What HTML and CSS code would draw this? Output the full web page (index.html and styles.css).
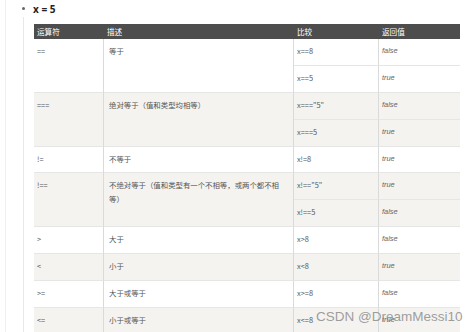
FILE: index.html
```html
<!DOCTYPE html>
<html lang="zh">
<head>
<meta charset="utf-8">
<link rel="stylesheet" href="styles.css">
</head>
<body>
<div class="page">
  <ul class="list">
    <li class="item">
      <div class="title"><span class="dot"></span><strong>x = 5</strong></div>
      <div class="body">
        <table class="ops">
          <colgroup>
            <col class="c1"><col class="c2"><col class="c3"><col class="c4">
          </colgroup>
          <thead>
            <tr><th>运算符</th><th>描述</th><th>比较</th><th>返回值</th></tr>
          </thead>
          <tbody>
            <tr class="w"><td rowspan="2" class="op">==</td><td rowspan="2" class="d">等于</td><td class="cmp">x==8</td><td class="v">false</td></tr>
            <tr class="w"><td class="cmp">x==5</td><td class="v">true</td></tr>
            <tr class="g"><td rowspan="2" class="op">===</td><td rowspan="2" class="d">绝对等于（值和类型均相等）</td><td class="cmp">x==="5"</td><td class="v">false</td></tr>
            <tr class="g"><td class="cmp">x===5</td><td class="v">true</td></tr>
            <tr class="w"><td class="op">!=</td><td class="d">不等于</td><td class="cmp">x!=8</td><td class="v">true</td></tr>
            <tr class="g"><td rowspan="2" class="op">!==</td><td rowspan="2" class="d">不绝对等于（值和类型有一个不相等，或两个都不相等）</td><td class="cmp">x!=="5"</td><td class="v">true</td></tr>
            <tr class="g"><td class="cmp">x!==5</td><td class="v">false</td></tr>
            <tr class="w"><td class="op">&gt;</td><td class="d">大于</td><td class="cmp">x&gt;8</td><td class="v">false</td></tr>
            <tr class="g"><td class="op">&lt;</td><td class="d">小于</td><td class="cmp">x&lt;8</td><td class="v">true</td></tr>
            <tr class="w"><td class="op">&gt;=</td><td class="d">大于或等于</td><td class="cmp">x&gt;=8</td><td class="v">false</td></tr>
            <tr class="g"><td class="op">&lt;=</td><td class="d">小于或等于</td><td class="cmp">x&lt;=8</td><td class="v">true</td></tr>
          </tbody>
        </table>
      </div>
    </li>
  </ul>
  <div class="mark">CSDN @DreamMessi10</div>
</div>
</body>
</html>
```
FILE: styles.css
```css
html, body {
  margin: 0;
  padding: 0;
  background: #fff;
  height: 100%;
  overflow: hidden;
}
.page {
  position: relative;
  margin-left: 5px;
  border-left: 1px solid #efefef;
  height: 332px;
  font-family: "Noto Sans CJK SC", "Liberation Sans", sans-serif;
  color: #555;
}
.list {
  list-style: none;
  margin: 0;
  padding: 0 0 0 16px;
}
.title {
  display: flex;
  align-items: center;
  height: 17px;
  font-family: "Noto Sans", "Noto Sans CJK SC", sans-serif;
  font-size: 10px;
  color: #222;
}
.title strong { font-weight: 700; }
.dot {
  width: 3px;
  height: 3px;
  border-radius: 50%;
  background: #666;
  margin-right: 8px;
}
.body {
  margin-left: 1px;
  border-left: 1px solid #e8e8e8;
  padding: 7px 0 0 10px;
}
.ops {
  border-collapse: separate;
  border-spacing: 0;
  table-layout: fixed;
  width: 426px;
  font-size: 7.4px;
}
.c1 { width: 70px; }
.c2 { width: 190px; }
.c3 { width: 85px; }
.c4 { width: 81px; }
.ops th {
  background: #4d4d4d;
  color: #fff;
  font-weight: 400;
  text-align: left;
  height: 15px;
  padding: 0 3px;
  line-height: 15px;
  font-size: 7.6px;
}
.ops td {
  height: 26.9px;
  box-sizing: border-box;
  padding: 5px 3px 0;
  line-height: 14px;
  vertical-align: top;
  border-bottom: 1px solid #e6e6e6;
  color: #555;
}
.ops td.op,
.ops td.d,
.ops td.cmp { border-right: 1px solid #dadada; }
.ops td.d { padding-left: 5px; padding-right: 8px; }
.ops td.v {
  font-family: "Liberation Sans", sans-serif;
  font-style: italic;
  color: #666;
}
.ops tr.w td { background: #fff; }
.ops tr.g td { background: #f4f3f0; }
.mark {
  position: absolute;
  left: 310px;
  top: 309px;
  font-family: "Liberation Sans", Arial, sans-serif;
  font-size: 13.5px;
  color: rgba(140, 140, 140, 0.85);
  white-space: nowrap;
}
```
